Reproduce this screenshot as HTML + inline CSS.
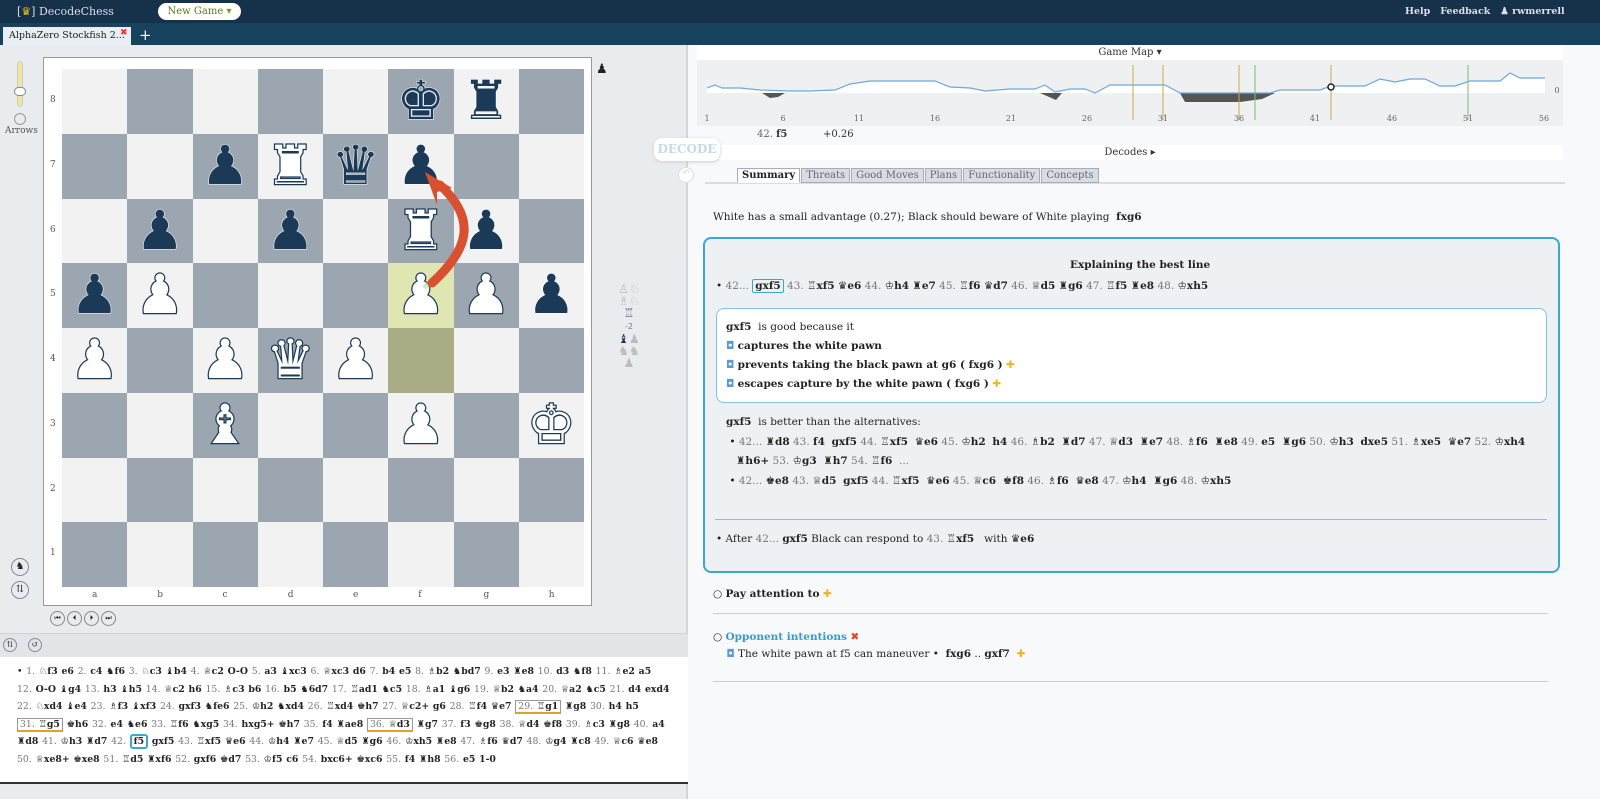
<!DOCTYPE html>
<html><head><meta charset="utf-8"><style>
*{margin:0;padding:0;box-sizing:border-box}
body{width:1600px;height:799px;overflow:hidden;background:#f8f9fa;font-family:"DejaVu Serif","Liberation Serif",serif;font-size:10.5px;color:#222;position:relative}
.a{position:absolute}
.nav{left:0;top:0;width:1600px;height:23px;background:#16324a}
.tabs{left:0;top:23px;width:1600px;height:22px;background:#17425d}
.left{left:0;top:45px;width:688px;height:754px;background:#e9ecef;border-right:2px solid #d0d4d8}
.sq{position:absolute;width:65.25px;height:64.75px}
.pc{position:absolute;width:65.25px;height:64.75px;text-align:center;line-height:64px;font-family:"DejaVu Sans",sans-serif;font-size:54px;paint-order:stroke fill}
.w{color:#fff;-webkit-text-stroke:2.5px #1b3a57}
.b{color:#1b3a57;-webkit-text-stroke:1px #fff}
.rk{font-size:9px;color:#555}
.mv b{font-weight:bold}
.mv{font-size:9.3px;line-height:17.6px;color:#222;letter-spacing:0;word-spacing:0.8px;white-space:nowrap}
.mv i{font-style:normal;color:#777}
.tb{display:inline-block;border:1px solid #aab;background:#d8dde2;color:#667;padding:1px 4px;font-size:10px;margin-right:1px}
</style></head><body>
<div class="a nav"></div>
<div class="a" style="left:17px;top:5px;color:#dde;font-size:11px">[<span style="color:#f0c419">♛</span>] DecodeChess</div>
<div class="a" style="left:158px;top:3px;width:83px;height:17px;background:#fff;border-radius:9px;color:#5a7d1a;font-size:10px;line-height:17px;text-align:center">New Game <span style="color:#7a9a1a">▾</span></div>
<div class="a" style="left:1405px;top:6px;color:#dde;font-weight:bold;font-size:9.5px">Help &nbsp;&nbsp;Feedback &nbsp;&nbsp;<span>♟</span> rwmerrell</div>
<div class="a tabs"></div>
<div class="a" style="left:3px;top:27px;width:128px;height:18px;background:#e9eef2;font-size:9.5px;padding:3px 6px;white-space:nowrap;overflow:hidden">AlphaZero Stockfish 2...</div>
<div class="a" style="left:120px;top:28px;color:#e33;font-size:9px">✖</div>
<div class="a" style="left:139px;top:26px;color:#fff;font-size:15px">+</div>
<div class="a left"></div>
<div class="a" style="left:17px;top:61px;width:6px;height:46px;background:#f3e4a0;border:1px solid #ccc;border-radius:3px"></div>
<div class="a" style="left:14px;top:87px;width:12px;height:9px;background:#fff;border:1px solid #888;border-radius:5px"></div>
<div class="a" style="left:14px;top:113px;width:12px;height:12px;border:1px solid #999;border-radius:50%"></div>
<div class="a" style="left:5px;top:126px;font-size:9px;color:#555">Arrows</div>
<div class="a" style="left:11px;top:558px;width:18px;height:18px;border:1px solid #889;border-radius:50%;font-size:10px;text-align:center;line-height:16px;font-family:'DejaVu Sans'">♞</div>
<div class="a" style="left:11px;top:581px;width:18px;height:18px;border:1px solid #889;border-radius:50%;font-size:10px;text-align:center;line-height:16px">⇅</div>
<div class="a" style="left:596px;top:62px;font-size:13px;font-family:'DejaVu Sans'">♟</div>
<div class="a" style="left:43px;top:57px;width:549px;height:549px;background:#fff;border:1px solid #999"></div>
<div id="bd"></div>
<svg class="a" style="left:0;top:0" width="688" height="620">
<path d="M424 288 L430 282" stroke="#9bd98a" stroke-width="5" opacity=".5"/>
<path d="M432 283 C468 250,478 220,440 185" stroke="#d8502f" stroke-width="9" fill="none" stroke-linecap="round"/>
<path d="M425 172 L452 188 L437 192 L437 205 Z" fill="#d8502f"/>
</svg>
<div class="a" style="left:616px;top:283px;width:26px;font-family:'DejaVu Sans';font-size:12px;color:#bbb;line-height:12px;text-align:center">♙♘<br>♗♘<br><span style="color:#668">♖</span><br><span style="color:#777;font-size:8px">-2</span><br><span style="color:#1b3a57">♝</span>♟<br>♞♞<br>♟</div>
<div class="a" style="left:50px;top:611px">
<span style="display:inline-block;width:15px;height:15px;border:1px solid #888;border-radius:50%;font-size:7px;text-align:center;line-height:13px;margin-right:2px">⏮</span><span style="display:inline-block;width:15px;height:15px;border:1px solid #888;border-radius:50%;font-size:7px;text-align:center;line-height:13px;margin-right:2px">⏴</span><span style="display:inline-block;width:15px;height:15px;border:1px solid #888;border-radius:50%;font-size:7px;text-align:center;line-height:13px;margin-right:2px">⏵</span><span style="display:inline-block;width:15px;height:15px;border:1px solid #888;border-radius:50%;font-size:7px;text-align:center;line-height:13px">⏭</span></div>
<div class="a" style="left:0;top:633px;width:688px;height:24px;background:#e2e5e8;border-top:1px solid #d0d4d8"></div>
<div class="a" style="left:3px;top:638px;width:14px;height:14px;border:1px solid #889;border-radius:50%;font-size:8px;text-align:center;line-height:12px">⇅</div>
<div class="a" style="left:28px;top:638px;width:14px;height:14px;border:1px solid #889;border-radius:50%;font-size:8px;text-align:center;line-height:12px">↺</div>
<div class="a" style="left:0;top:657px;width:688px;height:126px;background:#fff"></div>
<div class="a" style="left:0;top:782px;width:688px;height:2px;background:#333"></div>
<div class="a mv" style="left:17px;top:663px;width:670px;overflow:hidden;font-family:'DejaVu Serif','DejaVu Sans',serif">
<div>• <i>1.</i> <b>♘f3</b> <b>e6</b> <i>2.</i> <b>c4</b> <b>♞f6</b> <i>3.</i> <b>♘c3</b> <b>♝b4</b> <i>4.</i> <b>♕c2</b> <b>O-O</b> <i>5.</i> <b>a3</b> <b>♝xc3</b> <i>6.</i> <b>♕xc3</b> <b>d6</b> <i>7.</i> <b>b4</b> <b>e5</b> <i>8.</i> <b>♗b2</b> <b>♞bd7</b> <i>9.</i> <b>e3</b> <b>♜e8</b> <i>10.</i> <b>d3</b> <b>♞f8</b> <i>11.</i> <b>♗e2</b> <b>a5</b></div>
<div><i>12.</i> <b>O-O</b> <b>♝g4</b> <i>13.</i> <b>h3</b> <b>♝h5</b> <i>14.</i> <b>♕c2</b> <b>h6</b> <i>15.</i> <b>♗c3</b> <b>b6</b> <i>16.</i> <b>b5</b> <b>♞6d7</b> <i>17.</i> <b>♖ad1</b> <b>♞c5</b> <i>18.</i> <b>♗a1</b> <b>♝g6</b> <i>19.</i> <b>♕b2</b> <b>♞a4</b> <i>20.</i> <b>♕a2</b> <b>♞c5</b> <i>21.</i> <b>d4</b> <b>exd4</b></div>
<div><i>22.</i> <b>♘xd4</b> <b>♝e4</b> <i>23.</i> <b>♗f3</b> <b>♝xf3</b> <i>24.</i> <b>gxf3</b> <b>♞fe6</b> <i>25.</i> <b>♔h2</b> <b>♞xd4</b> <i>26.</i> <b>♖xd4</b> <b>♚h7</b> <i>27.</i> <b>♕c2+</b> <b>g6</b> <i>28.</i> <b>♖f4</b> <b>♛e7</b> <span style="border:1px solid #999;border-bottom:2px solid #e0a030;padding:0 2px"><i>29.</i> <b>♖g1</b></span> <b>♜g8</b> <i>30.</i> <b>h4</b> <b>h5</b></div>
<div><span style="border:1px solid #999;border-bottom:2px solid #e0a030;padding:0 2px"><i>31.</i> <b>♖g5</b></span> <b>♚h6</b> <i>32.</i> <b>e4</b> <b>♞e6</b> <i>33.</i> <b>♖f6</b> <b>♞xg5</b> <i>34.</i> <b>hxg5+</b> <b>♚h7</b> <i>35.</i> <b>f4</b> <b>♜ae8</b> <span style="border:1px solid #999;border-bottom:2px solid #e0a030;padding:0 2px"><i>36.</i> <b>♕d3</b></span> <b>♜g7</b> <i>37.</i> <b>f3</b> <b>♚g8</b> <i>38.</i> <b>♕d4</b> <b>♚f8</b> <i>39.</i> <b>♗c3</b> <b>♜g8</b> <i>40.</i> <b>a4</b></div>
<div><b>♜d8</b> <i>41.</i> <b>♔h3</b> <b>♜d7</b> <i>42.</i> <span style="border:2px solid #3aa7d3;border-radius:3px;padding:0 2px"><b>f5</b></span> <b>gxf5</b> <i>43.</i> <b>♖xf5</b> <b>♛e6</b> <i>44.</i> <b>♔h4</b> <b>♜e7</b> <i>45.</i> <b>♕d5</b> <b>♜g6</b> <i>46.</i> <b>♔xh5</b> <b>♜e8</b> <i>47.</i> <b>♗f6</b> <b>♛d7</b> <i>48.</i> <b>♔g4</b> <b>♜c8</b> <i>49.</i> <b>♕c6</b> <b>♛e8</b></div>
<div><i>50.</i> <b>♕xe8+</b> <b>♚xe8</b> <i>51.</i> <b>♖d5</b> <b>♜xf6</b> <i>52.</i> <b>gxf6</b> <b>♚d7</b> <i>53.</i> <b>♔f5</b> <b>c6</b> <i>54.</i> <b>bxc6+</b> <b>♚xc6</b> <i>55.</i> <b>f4</b> <b>♜h8</b> <i>56.</i> <b>e5</b> <b>1-0</b></div>
</div>
<div class="a" style="left:697px;top:45px;width:866px;height:15px;background:#fff;text-align:center;font-size:10px;color:#333;line-height:15px">Game Map ▾</div>
<div class="a" style="left:697px;top:60px;width:866px;height:66px;background:#eef0f2"></div>
<svg class="a" style="left:0;top:0" width="1600" height="130">
<path d="M707 88 L715 85 L722 88 L740 88 L760 90 L790 91 L810 91 L835 90 L850 84 L870 81 L935 81 L950 87 L970 88 L985 91 L1010 89 L1035 89 L1045 85 L1055 92 L1070 89 L1085 89 L1095 93 L1110 85 L1140 85 L1165 85 L1180 93 L1270 93 L1280 90 L1320 90 L1331 86 L1350 86 L1365 86 L1380 79 L1395 82 L1410 79 L1425 79 L1440 86 L1455 86 L1470 81 L1500 81 L1510 73 L1520 78 L1545 78 L1545 93 L707 93 Z" fill="#fff"/>
<path d="M762 93 L770 98 L778 97 L785 93 Z M1040 93 L1056 100 L1062 93 Z M1180 93 L1185 102 L1240 102 L1262 99 L1275 93 Z" fill="#555"/>
<path d="M707 88 L715 85 L722 88 L740 88 L760 90 L790 91 L810 91 L835 90 L850 84 L870 81 L935 81 L950 87 L970 88 L985 91 L1010 89 L1035 89 L1045 85 L1055 92 L1070 89 L1085 89 L1095 93 L1110 85 L1140 85 L1165 85 L1180 93 L1270 93 L1280 90 L1320 90 L1331 86 L1350 86 L1365 86 L1380 79 L1395 82 L1410 79 L1425 79 L1440 86 L1455 86 L1470 81 L1500 81 L1510 73 L1520 78 L1545 78" fill="none" stroke="#6fa8dc" stroke-width="1.2"/>
<g stroke-width="1"><line x1="1133" y1="65" x2="1133" y2="120" stroke="#c9a84a"/><line x1="1163" y1="65" x2="1163" y2="120" stroke="#c9a84a"/><line x1="1239" y1="65" x2="1239" y2="120" stroke="#c9a84a"/><line x1="1255" y1="65" x2="1255" y2="120" stroke="#7bbf6a"/><line x1="1331" y1="65" x2="1331" y2="120" stroke="#c9a84a"/><line x1="1468" y1="65" x2="1468" y2="120" stroke="#7bbf6a"/></g>
<circle cx="1331" cy="87" r="3" fill="#fff" stroke="#222" stroke-width="1.5"/>
<g font-size="8" fill="#666" font-family="DejaVu Serif" text-anchor="middle"><text x="707" y="121">1</text><text x="783" y="121">6</text><text x="859" y="121">11</text><text x="935" y="121">16</text><text x="1011" y="121">21</text><text x="1087" y="121">26</text><text x="1163" y="121">31</text><text x="1239" y="121">36</text><text x="1315" y="121">41</text><text x="1392" y="121">46</text><text x="1468" y="121">51</text><text x="1544" y="121">56</text><text x="1557" y="93">0</text></g>
</svg>
<div class="a" style="left:757px;top:129px;font-size:10px;color:#333"><span style="color:#666">42.</span> <b>f5</b></div>
<div class="a" style="left:823px;top:129px;font-size:10px;color:#333">+0.26</div>
<div class="a" style="left:697px;top:145px;width:866px;height:15px;background:#fff;text-align:center;font-size:10px;color:#333;line-height:15px">Decodes ▸</div>
<div class="a" style="left:654px;top:138px;width:66px;height:23px;background:#fff;border-radius:8px;box-shadow:0 1px 3px #ccc;color:#c5dbe6;font-weight:bold;font-size:12px;line-height:23px;text-align:center">DECODE</div>
<div class="a" style="left:678px;top:167px;width:16px;height:16px;border:1px solid #ddd;border-radius:50%;background:#fff;color:#ccc;font-size:9px;text-align:center">↶</div>
<div class="a" style="left:705px;top:182px;width:860px;height:2px;background:#d6dde3"></div>
<div class="a" style="left:737px;top:168px;white-space:nowrap"><span class="tb" style="background:#fff;color:#222;font-weight:bold;border-bottom-color:#fff">Summary</span><span class="tb">Threats</span><span class="tb">Good Moves</span><span class="tb">Plans</span><span class="tb">Functionality</span><span class="tb">Concepts</span></div>
<div class="a" style="left:713px;top:211px;font-size:10.5px">White has a small advantage (0.27); Black should beware of White playing &nbsp;<b>fxg6</b></div>
<div class="a" style="left:703px;top:237px;width:857px;height:336px;background:#eef1f4;border:2px solid #3aa7d3;border-radius:8px"></div>
<div class="a" style="left:1070px;top:259px;font-weight:bold;font-size:10.5px">Explaining the best line</div>
<div class="a" style="left:716px;top:280px;font-size:10.5px;font-family:'DejaVu Serif','DejaVu Sans',serif;white-space:nowrap">• <span style="color:#777">42...</span> <b style="border:1px solid #3aa7d3;border-radius:2px;padding:0 2px">gxf5</b> <span style="color:#777">43.</span> <b>♖xf5</b> <b>♛e6</b> <span style="color:#777">44.</span> <b>♔h4</b> <b>♜e7</b> <span style="color:#777">45.</span> <b>♖f6</b> <b>♛d7</b> <span style="color:#777">46.</span> <b>♕d5</b> <b>♜g6</b> <span style="color:#777">47.</span> <b>♖f5</b> <b>♜e8</b> <span style="color:#777">48.</span> <b>♔xh5</b></div>
<div class="a" style="left:716px;top:308px;width:831px;height:95px;background:#fff;border:1px solid #7fc3e0;border-radius:8px"></div>
<div class="a" style="left:726px;top:318px;font-size:10.5px;line-height:19px"><b>gxf5</b> &nbsp;is good because it<br><span style="color:#5b9bd5">◘</span> <b>captures the white pawn</b><br><span style="color:#5b9bd5">◘</span> <b>prevents taking the black pawn at g6 ( fxg6 )</b> <span style="color:#e8b820">✚</span><br><span style="color:#5b9bd5">◘</span> <b>escapes capture by the white pawn ( fxg6 )</b> <span style="color:#e8b820">✚</span></div>
<div class="a" style="left:726px;top:413px;font-size:10.5px;line-height:19.5px;font-family:'DejaVu Serif','DejaVu Sans',serif;white-space:nowrap"><b>gxf5</b> &nbsp;is better than the alternatives:<br>
&nbsp;• <span style="color:#777">42...</span> <b>♜d8</b> <span style="color:#777">43.</span> <b>f4</b> &nbsp;<b>gxf5</b> <span style="color:#777">44.</span> <b>♖xf5</b> &nbsp;<b>♛e6</b> <span style="color:#777">45.</span> <b>♔h2</b> &nbsp;<b>h4</b> <span style="color:#777">46.</span> <b>♗b2</b> &nbsp;<b>♜d7</b> <span style="color:#777">47.</span> <b>♕d3</b> &nbsp;<b>♜e7</b> <span style="color:#777">48.</span> <b>♗f6</b> &nbsp;<b>♜e8</b> <span style="color:#777">49.</span> <b>e5</b> &nbsp;<b>♜g6</b> <span style="color:#777">50.</span> <b>♔h3</b> &nbsp;<b>dxe5</b> <span style="color:#777">51.</span> <b>♗xe5</b> &nbsp;<b>♛e7</b> <span style="color:#777">52.</span> <b>♔xh4</b><br>
&nbsp;&nbsp;&nbsp;<b>♜h6+</b> <span style="color:#777">53.</span> <b>♔g3</b> &nbsp;<b>♜h7</b> <span style="color:#777">54.</span> <b>♖f6</b> &nbsp;<span style="color:#777">...</span><br>
&nbsp;• <span style="color:#777">42...</span> <b>♚e8</b> <span style="color:#777">43.</span> <b>♕d5</b> &nbsp;<b>gxf5</b> <span style="color:#777">44.</span> <b>♖xf5</b> &nbsp;<b>♛e6</b> <span style="color:#777">45.</span> <b>♕c6</b> &nbsp;<b>♚f8</b> <span style="color:#777">46.</span> <b>♗f6</b> &nbsp;<b>♛e8</b> <span style="color:#777">47.</span> <b>♔h4</b> &nbsp;<b>♜g6</b> <span style="color:#777">48.</span> <b>♔xh5</b></div>
<div class="a" style="left:715px;top:519px;width:832px;height:1px;background:#7fc3e0"></div>
<div class="a" style="left:716px;top:533px;font-size:10.5px;font-family:'DejaVu Serif','DejaVu Sans',serif">• After <span style="color:#777">42...</span> <b>gxf5</b> Black can respond to <span style="color:#777">43.</span> <b>♖xf5</b> &nbsp; with <b>♛e6</b></div>
<div class="a" style="left:713px;top:588px;font-size:10.5px">○ <b>Pay attention to</b> <span style="color:#e8b820">✚</span></div>
<div class="a" style="left:713px;top:613px;width:835px;height:1px;background:#ccc"></div>
<div class="a" style="left:713px;top:629px;font-size:10.5px;line-height:17px">○ <b style="color:#3a9ad0">Opponent intentions</b> <span style="color:#e84030">✖</span><br>&nbsp;&nbsp;&nbsp;&nbsp;<span style="color:#5b9bd5">◘</span> The white pawn at f5 can maneuver • &nbsp;<b>fxg6</b> .. <b>gxf7</b> &nbsp;<span style="color:#e8b820">✚</span></div>
<div class="a" style="left:713px;top:681px;width:835px;height:1px;background:#ccc"></div>
<script>
var bd=document.getElementById('bd'),h='';
var P={'f8':'b♚','g8':'b♜','c7':'b♟','d7':'w♜','e7':'b♛','f7':'b♟','b6':'b♟','d6':'b♟','f6':'w♜','g6':'b♟','a5':'b♟','b5':'w♟','f5':'w♟','g5':'w♟','h5':'b♟','a4':'w♟','c4':'w♟','d4':'w♛','e4':'w♟','c3':'w♝','f3':'w♟','h3':'w♚'};
var F='abcdefgh';
for(var r=0;r<8;r++)for(var c=0;c<8;c++){var x=62+c*65.25,y=69+r*64.75,sqn=F[c]+(8-r);
var bg=((r+c)%2==0)?'#f2f2f2':'#9ba6b1';if(sqn=='f5')bg='#dfe6b2';if(sqn=='f4')bg='#a8ad86';
h+='<div class="sq" style="left:'+x+'px;top:'+y+'px;background:'+bg+'"></div>';
if(P[sqn])h+='<div class="pc '+P[sqn][0]+'" style="left:'+x+'px;top:'+y+'px">'+P[sqn].slice(1)+'</div>';}
for(var r=0;r<8;r++)h+='<div class="a rk" style="left:50px;top:'+(95+r*64.75)+'px">'+(8-r)+'</div>';
for(var c=0;c<8;c++)h+='<div class="a rk" style="left:'+(92+c*65.25)+'px;top:590px">'+F[c]+'</div>';
bd.innerHTML=h;
</script>
</body></html>
